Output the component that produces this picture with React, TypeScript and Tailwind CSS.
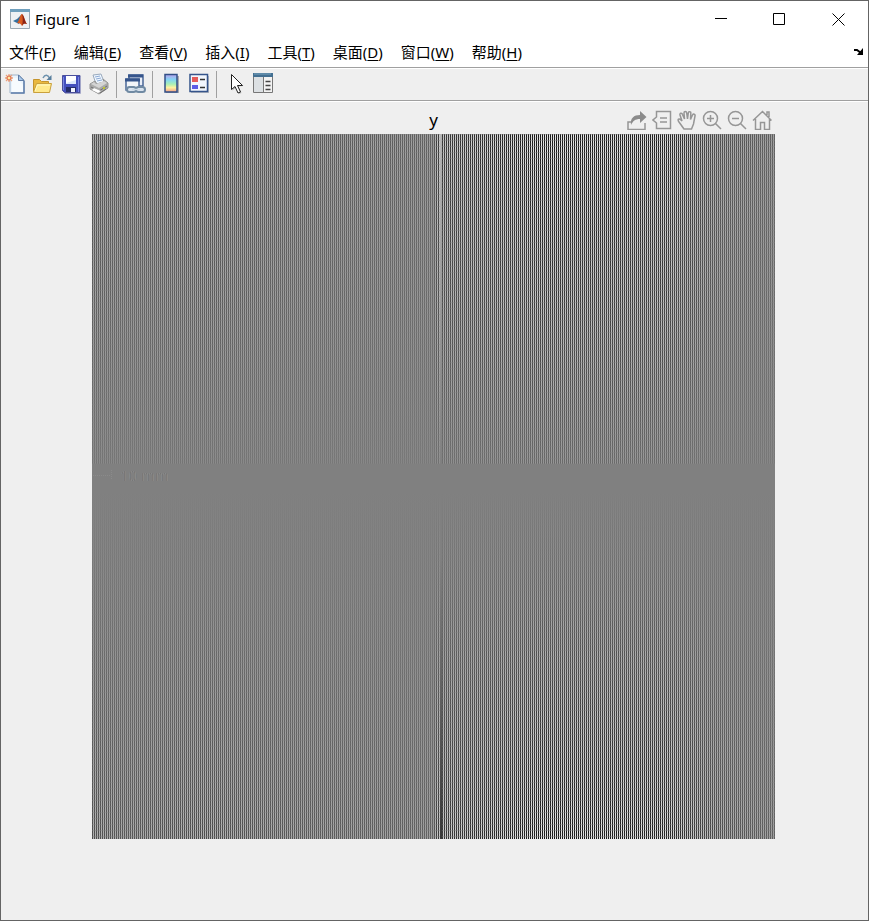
import type { ReactNode } from 'react';

const menus = [
    { label: '文件', hotkey: 'F' },
    { label: '编辑', hotkey: 'E' },
    { label: '查看', hotkey: 'V' },
    { label: '插入', hotkey: 'I' },
    { label: '工具', hotkey: 'T' },
    { label: '桌面', hotkey: 'D' },
    { label: '窗口', hotkey: 'W' },
    { label: '帮助', hotkey: 'H' },
];

function Icon({ children }: { children: ReactNode }) {
    return (
        <svg width="22" height="22" viewBox="0 0 22 22" fill="none" aria-hidden="true">
            {children}
        </svg>
    );
}

const toolGroups = [
    [
        {
            name: '新建图窗',
            icon: (
                <Icon>
                    <path d="M6 2h9l5 5v13H6z" fill="#eaf4fd" stroke="#9fb4cb" />
                    <path d="M8 19V5h5l6 7v7z" fill="#fff" opacity=".6" />
                    <path d="M14.5 2v5.500h5.500z" fill="#a9c8ea" stroke="#5e7ba5" />
                    <path d="M20 8v12H7" stroke="#5f7eab" strokeWidth="1.5" />
                    <path d="M5 1v8M1 5h8M2 2l6 6M8 2L2 8" stroke="#eba27f" strokeWidth="1.3" />
                    <circle cx="5" cy="5" r="2" fill="#ffe6a0" stroke="#dd6542" />
                </Icon>
            ),
        },
        {
            name: '打开文件',
            icon: (
                <Icon>
                    <path d="M11 5c2-4 5-3.5 6.5 0" stroke="#6c91ad" strokeWidth="1.5" />
                    <path d="M19.500 2v5h-5z" fill="#587f9e" />
                    <path d="M1.500 18.500v-12h6l2 2h7v3" fill="#e9b83f" stroke="#c4942d" />
                    <path d="M1.500 19.500l3-9h15l-2 9z" fill="#ffe98c" stroke="#c9a03c" />
                    <path d="M3 18l2.500-6H18" stroke="#fffbc8" />
                </Icon>
            ),
        },
        {
            name: '保存图窗',
            icon: (
                <Icon>
                    <path d="M2.500 2.500h17.500v17H4.500l-2-2z" fill="#4450bd" stroke="#4a4f9c" />
                    <path d="M6 3h10v8H6z" fill="#dce8fb" />
                    <path d="M6 3h10v4L6 10z" fill="#fff" />
                    <path d="M3.500 4v13M18.500 4v15" stroke="#7886e1" />
                    <path d="M6 14h10v5H6z" fill="#252e69" />
                    <path d="M11 15h4v4h-4z" fill="#f1f4ff" />
                    <path d="M20.500 4v16.500H5" stroke="#a4a7c9" />
                </Icon>
            ),
        },
        {
            name: '打印图窗',
            icon: (
                <Icon>
                    <path d="M5 2l8-1 3 8-8 2z" fill="#eef6ff" stroke="#9aaabd" />
                    <path d="M7 4l5-1M8 6l5-1M9 8l5-1" stroke="#8eabd4" />
                    <path d="M2 11l5-3 2 3 7-2-1-3 5 4v5l-9 6-9-5z" fill="#aaa" stroke="#959595" />
                    <path d="M3 11l8 4 8-5-3-2-8 3-2-2z" fill="#d4d4d4" />
                    <path d="M3 14l8 4 8-5M12 20l6-4" stroke="#6e6e6e" />
                    <path d="M4 17l6 3 3-2-7-3z" fill="#fff" />
                    <path d="M15 15h2" stroke="#bdc52e" strokeWidth="2" />
                </Icon>
            ),
        },
    ],
    [
        {
            name: '链接绘图',
            icon: (
                <Icon>
                    <path d="M5 2h14v11H5z" fill="#e9eef7" stroke="#4a6798" strokeWidth="1.5" />
                    <path d="M4 3h15" stroke="#35548b" strokeWidth="3" />
                    <path d="M2 6h13v11H2z" fill="#f2f5f9" stroke="#4a6798" strokeWidth="1.5" />
                    <path d="M1 7h15" stroke="#35548b" strokeWidth="3" />
                    <rect x="3" y="14" width="9" height="5" rx="2.5" fill="#d9e3ef" stroke="#708aa3" strokeWidth="2" />
                    <rect x="12" y="14" width="9" height="5" rx="2.5" fill="#d9e3ef" stroke="#708aa3" strokeWidth="2" />
                    <path d="M8 16.500h8" stroke="#cbd8e5" strokeWidth="1.5" />
                </Icon>
            ),
        },
    ],
    [
        {
            name: '插入颜色栏',
            icon: (
                <Icon>
                    <defs>
                        <linearGradient id="colorbar" x2="0" y2="1">
                            <stop stopColor="#b8a0ed" />
                            <stop offset=".3" stopColor="#83d6f4" />
                            <stop offset=".55" stopColor="#a8efb5" />
                            <stop offset=".75" stopColor="#fff2a0" />
                            <stop offset="1" stopColor="#f19b86" />
                        </linearGradient>
                    </defs>
                    <path d="M6 3h13v17H6z" fill="#a9a9ae" />
                    <path d="M5 1.500h12v17.500H5z" fill="url(#colorbar)" stroke="#324f86" strokeWidth="1.5" />
                </Icon>
            ),
        },
        {
            name: '插入图例',
            icon: (
                <Icon>
                    <path d="M3 3h18v17H3z" fill="#b5b8c0" />
                    <path d="M2 1.500h17.500v17H2z" fill="#f2f6fd" stroke="#35548b" strokeWidth="1.5" />
                    <path d="M4 4h6v5H4z" fill="#e45a59" />
                    <path d="M4 12h6v4H4z" fill="#5b5be6" />
                    <path d="M12 6.500h5M12 14.500h5" stroke="#333" strokeWidth="1.5" />
                </Icon>
            ),
        },
    ],
    [
        {
            name: '编辑绘图',
            icon: (
                <Icon>
                    <path d="M8.500 2.500v15l3.500-3 3 6.500 2.500-1-3-6.500 5-.5z" fill="#bbb" />
                    <path d="M7.500 1.500v15l3.500-3 3 6.500 2.500-1-3-6.500h5z" fill="#fff" stroke="#222" />
                </Icon>
            ),
        },
        {
            name: '打开属性检查器',
            icon: (
                <Icon>
                    <path d="M1.500.5h19v19h-19z" fill="#dce0e3" stroke="#777" />
                    <path d="M1 0h20v4H1z" fill="#436f91" />
                    <path d="M2 1h17" stroke="#7ba6c0" />
                    <path d="M11.500 4v15" stroke="#777" />
                    <path d="M12 4h8v15h-8z" fill="#f3f3f3" />
                    <path d="M13.500 8.500h5M13.500 12.500h5M13.500 16.500h5" stroke="#444" strokeWidth="1.5" />
                </Icon>
            ),
        },
    ],
];

const axesTools = [
    {
        name: '导出',
        icon: (
            <>
                <path d="M4 12H1v7.500h17V13" />
                <path d="M4 15c-1-7 3-10 9-10V1l6.500 6-6.500 6V9c-5 0-7 2-9 6z" fill="#8b8b8b" stroke="none" />
            </>
        ),
    },
    { name: '数据提示', icon: <path d="M4.500 7V1.500h14v17h-14V13L1 10zM8 8h7M8 12h7" /> },
    {
        name: '平移',
        icon: <path d="M7 19l-5-7c-2-3 0-4 2-2l1 1-2-6c-.5-2 2-2.500 2.500-.5L7.500 9 7 3c0-2 2.500-2 2.700 0L10.500 9l.8-6c.2-2 2.700-1.700 2.500.2L13.500 9.500l2-4.500c.8-1.700 3-.8 2.500 1l-1.500 8-2 5z" />,
    },
    {
        name: '放大',
        icon: (
            <>
                <circle cx="8.500" cy="8.500" r="7" />
                <path d="M13.500 13.500l5.500 5.500M5 8.500h7M8.500 5v7" />
            </>
        ),
    },
    {
        name: '缩小',
        icon: (
            <>
                <circle cx="8.500" cy="8.500" r="7" />
                <path d="M13.500 13.500l5.500 5.500M5 8.500h7" />
            </>
        ),
    },
    { name: '还原视图', icon: <path d="M1 10.500l9.500-9 9 9M3.500 9v10.500h5v-7h4v7h5V9M15 5V2h2v5" /> },
];

// alternating one-pixel columns whose contrast fades towards the middle row
function StripePlot() {
    return (
        <svg className="w-full flex-1" role="img" aria-label="y" shapeRendering="crispEdges">
            <defs>
                <pattern id="stripes" width="2" height="2" patternUnits="userSpaceOnUse">
                    <rect width="1" height="2" fill="#000" />
                    <rect x="1" width="1" height="2" fill="#fff" />
                </pattern>
                <pattern id="rows" width="8" height="6" patternUnits="userSpaceOnUse">
                    <rect width="8" height="1" fill="#808080" opacity=".4" />
                    <rect y="3" width="8" height="1" fill="#808080" opacity=".15" />
                </pattern>
                <pattern id="ghost" width="2" height="2" patternUnits="userSpaceOnUse">
                    <rect width="1" height="2" fill="#767676" />
                    <rect x="1" width="1" height="2" fill="#8a8a8a" />
                </pattern>
                <linearGradient id="across">
                    <stop stopColor="#808080" stopOpacity=".6" />
                    <stop offset=".05" stopColor="#808080" stopOpacity=".68" />
                    <stop offset=".16" stopColor="#808080" stopOpacity=".58" />
                    <stop offset=".3" stopColor="#808080" stopOpacity=".68" />
                    <stop offset=".5" stopColor="#808080" stopOpacity=".75" />
                    <stop offset=".505" stopColor="#808080" stopOpacity=".45" />
                    <stop offset=".66" stopColor="#808080" stopOpacity=".18" />
                    <stop offset=".84" stopColor="#808080" stopOpacity=".25" />
                    <stop offset=".92" stopColor="#808080" stopOpacity=".6" />
                    <stop offset="1" stopColor="#808080" stopOpacity=".75" />
                </linearGradient>
                <linearGradient id="down" x2="0" y2="1">
                    <stop stopColor="#808080" stopOpacity="0" />
                    <stop offset=".25" stopColor="#808080" stopOpacity=".35" />
                    <stop offset=".467" stopColor="#808080" stopOpacity=".78" />
                    <stop offset=".468" stopColor="#808080" />
                    <stop offset=".51" stopColor="#808080" />
                    <stop offset=".6" stopColor="#808080" stopOpacity=".85" />
                    <stop offset=".8" stopColor="#808080" stopOpacity=".4" />
                    <stop offset="1" stopColor="#808080" stopOpacity="0" />
                </linearGradient>
                <linearGradient id="seam" x2="0" y2="1">
                    <stop stopColor="#b4b4b4" />
                    <stop offset=".35" stopColor="#8c8c8c" />
                    <stop offset=".47" stopColor="#808080" />
                    <stop offset=".6" stopColor="#808080" />
                    <stop offset=".8" stopColor="#606060" />
                    <stop offset="1" stopColor="#383838" />
                </linearGradient>
            </defs>
            <rect width="100%" height="100%" fill="url(#stripes)" />
            <rect width="100%" height="100%" fill="url(#across)" />
            <rect width="100%" height="100%" fill="url(#rows)" />
            <rect width="100%" height="100%" fill="url(#down)" />
            <rect x="51%" width="2" height="100%" fill="url(#seam)" />
            <path d="M1 341h18M19 336v10" stroke="#8a8a8a" strokeDasharray="1 1" />
            <text x="28" y="347" fontSize="15" fill="url(#ghost)">10 mm</text>
        </svg>
    );
}

export default function App() {
    return (
        <div className="flex min-h-screen flex-col border border-[#646464] bg-[#efefef] font-['Noto_Sans','Noto_Sans_CJK_SC',sans-serif] text-black">
            <header className="bg-white">
                <div className="flex h-9 items-center pl-2">
                    <svg width="20" height="20" viewBox="0 0 20 20" className="ml-px" aria-hidden="true">
                        <path d="M.5.5h19v19H.5z" fill="#eef1f4" stroke="#9aa7b2" />
                        <path d="M0 0h20v3H0z" fill="#6f9fbd" />
                        <path d="M3 12l4-2 5-5-3 10-2-1z" fill="#356f9e" />
                        <path d="M7 14c2-1 3-9 5-9 2 1 3 8 5 10-2-1-3-1-5 2-1-2-2-3-5-3z" fill="#d95a1e" />
                        <path d="M12 5c1 3 1 7 0 12 1-3 3-3 5-2-2-2-3-9-5-10z" fill="#8c2416" />
                    </svg>
                    <h1 className="ml-[5px] flex-1 text-[15px] leading-5">Figure 1</h1>
                    <button aria-label="最小化" className="flex h-9 w-[59px] items-center justify-center">
                        <svg width="13" height="13" stroke="#000"><path d="M1 5.500h12" /></svg>
                    </button>
                    <button aria-label="最大化" className="flex h-9 w-[59px] items-center justify-center">
                        <svg width="13" height="13" fill="none" stroke="#000"><path d="M.5.5h11v11H.5z" /></svg>
                    </button>
                    <button aria-label="关闭" className="flex h-9 w-[59px] items-center justify-center">
                        <svg width="13" height="13" stroke="#000"><path d="M.5.5l12 12M12.500.5l-12 12" /></svg>
                    </button>
                </div>
                <nav className="flex h-[30px] items-center gap-0.5">
                    {menus.map((menu) => (
                        <button key={menu.hotkey} className="px-2 text-[15px] leading-5 whitespace-nowrap">
                            {menu.label}(<span className="underline underline-offset-2">{menu.hotkey}</span>)
                        </button>
                    ))}
                    <button aria-label="停靠图窗" className="mr-1 ml-auto">
                        <svg width="10" height="8" fill="none">
                            <path d="M0 2h3l4 3" stroke="#000" strokeWidth="2" />
                            <path d="M9 0v7H3z" fill="#000" />
                        </svg>
                    </button>
                </nav>
            </header>

            <div role="toolbar" aria-label="图窗工具栏" className="flex h-[34px] items-center border-y border-[#a0a0a0] pl-[3px] shadow-[inset_0_1px_#fff,0_1px_#fff]">
                {toolGroups.map((group, index) => (
                    <div key={index} className="flex items-center">
                        {index > 0 && <div className="mr-[7px] ml-[6px] h-[27px] w-px bg-[#a0a0a0]" />}
                        <div className="flex gap-[6px]">
                            {group.map((tool) => (
                                <button key={tool.name} aria-label={tool.name}>{tool.icon}</button>
                            ))}
                        </div>
                    </div>
                ))}
            </div>

            <main className="flex flex-1 flex-col pr-[93px] pb-[81px] pl-[91px]">
                <div className="grid h-[33px] grid-cols-[1fr_auto_1fr] items-center">
                    <h2 className="col-start-2 pt-1 text-[17px] leading-6">y</h2>
                    <div className="flex gap-[5px] justify-self-end pt-1 pr-[3px]">
                        {axesTools.map((tool) => (
                            <button key={tool.name} aria-label={tool.name}>
                                <svg width="20" height="20" viewBox="0 0 20 20" fill="none" stroke="#969696" strokeWidth="1.5" aria-hidden="true">
                                    {tool.icon}
                                </svg>
                            </button>
                        ))}
                    </div>
                </div>
                <StripePlot />
            </main>
        </div>
    );
}
